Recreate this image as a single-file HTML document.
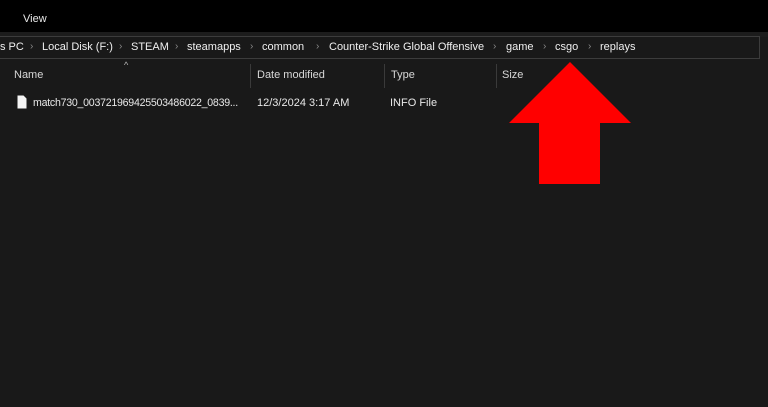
<!DOCTYPE html>
<html><head><meta charset="utf-8"><style>
*{margin:0;padding:0;box-sizing:border-box}
body{width:768px;height:407px;background:#191919;font-family:"Liberation Sans",sans-serif;color:#fff;position:relative;overflow:hidden;font-size:11px}
.top{position:absolute;left:0;top:0;width:768px;height:32px;background:#000}
.view{position:absolute;left:23px;top:13px;font-size:11px;color:#e8e8e8}
.band{position:absolute;left:0;top:32px;width:768px;height:5px;background:#1c1c1c}
.addr{position:absolute;left:-2px;top:36px;width:762px;height:23px;background:#191919;border:1px solid #3c3c3c}
.crumb{position:absolute;top:41px;font-size:11px;color:#f0f0f0;white-space:nowrap}
.sep{position:absolute;top:41px;font-size:10px;color:#8a8a8a}
.hdr{position:absolute;top:69px;font-size:11px;color:#d8d8d8}
.vl{position:absolute;top:64px;width:1px;height:24px;background:#3a3a3a}
.row{position:absolute;top:97px;font-size:11px;color:#e8e8e8;white-space:nowrap}
</style></head><body>
<div class="top"></div>
<div class="view">View</div>
<div class="band"></div>
<div class="addr"></div>
<span class="crumb" style="left:0">s PC</span>
<span class="sep" style="left:30px">›</span>
<span class="crumb" style="left:42px">Local Disk (F:)</span>
<span class="sep" style="left:119px">›</span>
<span class="crumb" style="left:131px">STEAM</span>
<span class="sep" style="left:175px">›</span>
<span class="crumb" style="left:187px">steamapps</span>
<span class="sep" style="left:250px">›</span>
<span class="crumb" style="left:262px">common</span>
<span class="sep" style="left:316px">›</span>
<span class="crumb" style="left:329px">Counter-Strike Global Offensive</span>
<span class="sep" style="left:493px">›</span>
<span class="crumb" style="left:506px">game</span>
<span class="sep" style="left:543px">›</span>
<span class="crumb" style="left:555px">csgo</span>
<span class="sep" style="left:588px">›</span>
<span class="crumb" style="left:600px">replays</span>
<div style="position:absolute;left:124px;top:60px;font-size:9px;color:#bbb">^</div>
<span class="hdr" style="left:14px">Name</span>
<div class="vl" style="left:250px"></div>
<span class="hdr" style="left:257px">Date modified</span>
<div class="vl" style="left:384px"></div>
<span class="hdr" style="left:391px">Type</span>
<div class="vl" style="left:496px"></div>
<span class="hdr" style="left:502px">Size</span>
<svg style="position:absolute;left:17px;top:95px" width="10" height="14"><path d="M0.5 0.5H6.5L9.5 3.5V13.5H0.5Z" fill="#f4f4f4"/></svg>
<span class="row" style="left:33px;font-size:10.6px;letter-spacing:-0.25px">match730_003721969425503486022_0839...</span>
<span class="row" style="left:257px">12/3/2024 3:17 AM</span>
<span class="row" style="left:390px">INFO File</span>
<svg style="position:absolute;left:0;top:0" width="768" height="407"><polygon points="570,62 631,123 600,123 600,184 539,184 539,123 509,123" fill="#ff0000"/></svg>
</body></html>
